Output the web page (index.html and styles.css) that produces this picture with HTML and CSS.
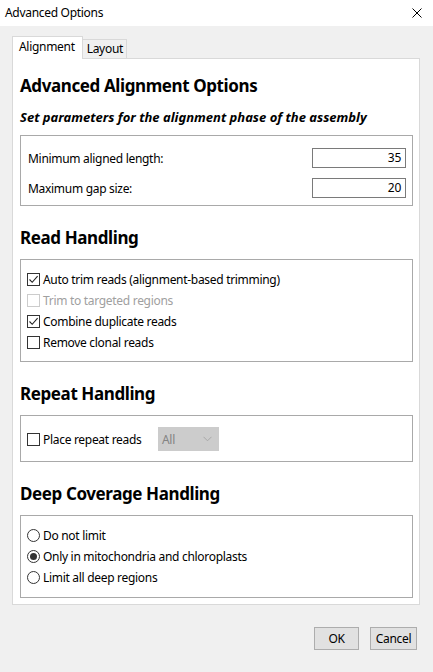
FILE: index.html
```html
<!DOCTYPE html>
<html lang="en">
<head>
  <meta charset="UTF-8" />
  <title>Advanced Options</title>
  <link rel="stylesheet" href="styles.css">
</head>
<body>
  <div class="window">
    <div class="titlebar">
      <span class="title">Advanced Options</span>
      <svg class="close" width="10" height="10" viewBox="0 0 10 10">
        <path d="M0.5 0.5 L9.5 9.5 M9.5 0.5 L0.5 9.5" stroke="#000" stroke-width="1" fill="none"/>
      </svg>
    </div>

    <div class="content">
      <div class="tabs">
        <div class="tab active">Alignment</div>
        <div class="tab">Layout</div>
      </div>

      <div class="panel">
        <h1>Advanced Alignment Options</h1>
        <p class="subtitle">Set parameters for the alignment phase of the assembly</p>

        <div class="group fields">
          <div class="field">
            <label>Minimum aligned length:</label>
            <div class="number">35</div>
          </div>
          <div class="field">
            <label>Maximum gap size:</label>
            <div class="number">20</div>
          </div>
        </div>

        <h2>Read Handling</h2>
        <div class="group list">
          <div class="option"><span class="box checked"><svg width="11" height="11" viewBox="0 0 11 11"><path d="M1.5 5.5 L4.2 8.3 L9.6 2.2" stroke="#222" stroke-width="1.1" fill="none"/></svg></span>Auto trim reads (alignment-based trimming)</div>
          <div class="option disabled"><span class="box"></span>Trim to targeted regions</div>
          <div class="option"><span class="box checked"><svg width="11" height="11" viewBox="0 0 11 11"><path d="M1.5 5.5 L4.2 8.3 L9.6 2.2" stroke="#222" stroke-width="1.1" fill="none"/></svg></span>Combine duplicate reads</div>
          <div class="option"><span class="box"></span>Remove clonal reads</div>
        </div>

        <h2>Repeat Handling</h2>
        <div class="group repeat">
          <div class="option repeat-check"><span class="box"></span>Place repeat reads</div>
          <div class="combo">
            <span>All</span>
            <svg width="9" height="6" viewBox="0 0 9 6"><path d="M0.5 0.8 L4.5 4.8 L8.5 0.8" stroke="#a8a8a8" stroke-width="1" fill="none"/></svg>
          </div>
        </div>

        <h2>Deep Coverage Handling</h2>
        <div class="group list radios">
          <div class="option"><span class="radio"></span>Do not limit</div>
          <div class="option"><span class="radio selected"></span>Only in mitochondria and chloroplasts</div>
          <div class="option"><span class="radio"></span>Limit all deep regions</div>
        </div>
      </div>

      <div class="buttons">
        <button class="ok">OK</button>
        <button class="cancel">Cancel</button>
      </div>
    </div>
  </div>
</body>
</html>
```

FILE: styles.css
```css
* {
  box-sizing: border-box;
}

body {
  margin: 0;
  font-family: 'Noto Sans', sans-serif;
  font-size: 12px;
  letter-spacing: -0.3px;
  color: #000;
  background: #f0f0f0;
}

.window {
  width: 433px;
  height: 672px;
  display: flex;
  flex-direction: column;
}

.titlebar {
  height: 26px;
  background: #fff;
  display: flex;
  align-items: center;
  justify-content: space-between;
  padding: 0 11px 0 5px;
}

.title {
  line-height: 16px;
}

.close {
  display: block;
}

.content {
  flex: 1;
  padding: 10px 13px 0 12px;
}

/* tabs */
.tabs {
  display: flex;
  align-items: flex-end;
  height: 22px;
}

.tab {
  height: 19px;
  line-height: 18px;
  padding: 0 3px 0 4px;
  border: 1px solid #d9d9d9;
  border-bottom: none;
  border-left: none;
  background: #f0f0f0;
}

.tab.active {
  height: 23px;
  line-height: 20px;
  padding: 0 7px 0 6px;
  border-left: 1px solid #d9d9d9;
  background: #fff;
  margin-bottom: -1px;
  position: relative;
  z-index: 1;
}

.panel {
  background: #fff;
  border: 1px solid #d9d9d9;
  padding: 15px 6px 6px 7px;
}

h1 {
  margin: 0;
  font-size: 17px;
  letter-spacing: -0.4px;
  line-height: 24px;
  font-weight: 700;
}

.subtitle {
  margin: 10px 0 9px;
  font-size: 13px;
  line-height: 18px;
  font-weight: 700;
  font-style: italic;
  letter-spacing: 0;
}

h2 {
  margin: 20px 0 9px;
  font-size: 17px;
  letter-spacing: -0.4px;
  line-height: 24px;
  font-weight: 700;
}

.group {
  border: 1px solid #a9a9a9;
}

/* numeric fields */
.fields {
  display: flex;
  flex-direction: column;
  gap: 10px;
  padding: 12px 6px 7px 7px;
}

.field {
  display: flex;
  align-items: center;
  justify-content: space-between;
  height: 20px;
}

.number {
  width: 94px;
  height: 20px;
  border: 1px solid #7a7a7a;
  text-align: right;
  padding-right: 4px;
  line-height: 18px;
}

/* checkboxes and radios */
.list {
  padding: 9px 6px 8px 6px;
}

.list.radios {
  padding-bottom: 9px;
}

.option {
  display: flex;
  align-items: center;
  height: 21px;
  gap: 3px;
}

.option.disabled {
  color: #a0a0a0;
}

.box {
  width: 13px;
  height: 13px;
  border: 1px solid #333;
  background: #fff;
  display: flex;
  align-items: center;
  justify-content: center;
}

.disabled .box {
  border-color: #cccccc;
}

.radio {
  width: 13px;
  height: 13px;
  border: 1px solid #333;
  border-radius: 50%;
  background: #fff;
  display: flex;
  align-items: center;
  justify-content: center;
}

.radio.selected::after {
  content: "";
  width: 7px;
  height: 7px;
  border-radius: 50%;
  background: #333;
}

/* repeat row */
.repeat {
  display: flex;
  align-items: center;
  padding: 11px 6px 10px 6px;
}

.repeat-check {
  width: 131px;
}

.combo {
  width: 61px;
  height: 24px;
  background: #cccccc;
  border: 1px solid #cccccc;
  color: #838383;
  display: flex;
  align-items: center;
  justify-content: space-between;
  padding: 0 6px 0 3px;
}

.combo svg {
  display: block;
}

/* buttons */
.buttons {
  display: flex;
  justify-content: flex-end;
  gap: 11px;
  padding: 22px 3px 0 0;
}

.buttons button {
  height: 23px;
  background: #e1e1e1;
  border: 1px solid #adadad;
  font-family: 'Noto Sans', sans-serif;
  font-size: 12px;
  letter-spacing: -0.3px;
  color: #000;
  padding: 0;
}

.ok {
  width: 45px;
}

.cancel {
  width: 47px;
}
```
